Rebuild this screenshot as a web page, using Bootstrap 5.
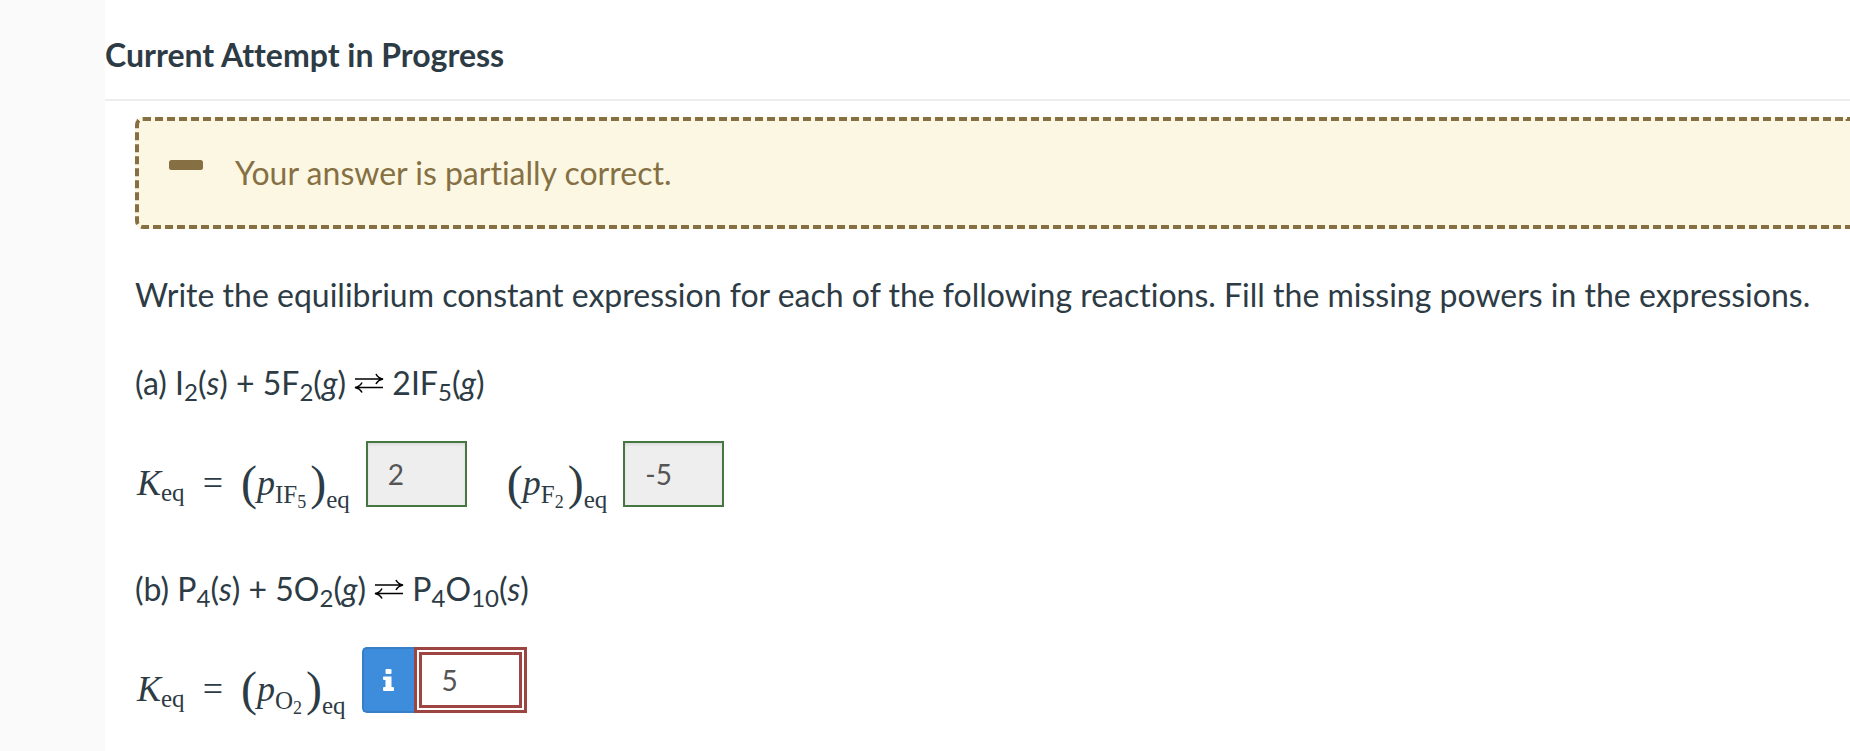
<!DOCTYPE html>
<html lang="en">
<head>
<meta charset="utf-8">
<meta name="viewport" content="width=device-width, initial-scale=1">
<title>Current Attempt in Progress</title>
<link rel="stylesheet" href="https://cdn.jsdelivr.net/npm/bootstrap@5.3.0/dist/css/bootstrap.min.css">
<style>
  body { font-family: Lato, sans-serif; font-size: 32px; line-height: 38px; font-variant-ligatures: none; color: #2d3b45; background: #fff; }
  .side-strip { width: 105px; background: #fafafa; }
  .attempt-head { padding: 36px 0 25px; border-bottom: 2px solid #ededed; }
  .attempt-head h1 { font-size: 32px; line-height: 38px; }
  .attempt-body { padding: 16px 0 32px 30px; }
  .partial-note { padding: 33px 30px; gap: 32px; border: 4px dashed #867043; border-right: 0; border-radius: 8px 0 0 8px; background: #fbf7e3; color: #867043; }
  .partial-note svg { width: 34px; height: 10px; margin-top: 6px; }
  .question-text { margin: 47px 0 50px; }
  .reaction { margin-bottom: 39px; }
  .reaction svg { width: 30px; height: 20px; vertical-align: 2px; }
  .answer-row { margin-bottom: 63px; column-gap: 16px; }
  .expr { font-family: "Liberation Serif", serif; font-size: 36px; line-height: 66px; padding: 9px 0 0 2px; height: 66px; white-space: nowrap; }
  .expr span { line-height: 0; }
  .expr-next { margin-left: 22px; }
  .low { font-size: 25px; vertical-align: -6px; }
  .low-deep { font-size: 25px; vertical-align: -13px; }
  .low-in { font-size: 25px; vertical-align: -8px; margin-right: 4px; }
  .low-in span { font-size: 18px; vertical-align: -5px; }
  .equals { margin: 0 18px; }
  .big-paren { font-size: 48px; vertical-align: -4px; }
  .power { width: 101px; height: 66px; padding: 0 20px; font-size: 28px; line-height: 34px; color: #555; border: 2px solid #467641; border-radius: 0; }
  .power:disabled { background: #eee; box-shadow: inset 0 2px 3px rgba(0,0,0,.08); opacity: 1; }
  .power.wrong { width: 113px; border: 8px double #9c4541; }
  .hint-btn { width: 52px; height: 66px; padding: 0; background: #3e8ddd; border: 2px solid #367ec8; border-right: 0; border-radius: 5px 0 0 5px; }
  .hint-btn svg { width: 12px; height: 22px; }
</style>
</head>
<body>
<div class="d-flex min-vh-100">
  <aside class="side-strip flex-shrink-0"></aside>
  <main class="flex-grow-1">
    <header class="attempt-head"><h1 class="fw-bold m-0">Current Attempt in Progress</h1></header>
    <div class="attempt-body">
      <div class="partial-note d-flex align-items-start" role="status">
        <svg viewBox="0 0 34 10" aria-hidden="true"><rect width="34" height="10" rx="2.5" fill="currentColor"/></svg>
        <span>Your answer is partially correct.</span>
      </div>
      <p class="question-text">Write the equilibrium constant expression for each of the following reactions. Fill the missing powers in the expressions.</p>

      <div class="reaction">(a) I<sub>2</sub>(<em>s</em>) + 5F<sub>2</sub>(<em>g</em>) <svg viewBox="0 0 30 20" fill="none" stroke="#000" stroke-width="1.6" role="img" aria-label="is in equilibrium with"><path d="M1 6H28M22 1Q24 5 29 6Q24 7 22 11M29 14.500H2M8 9.500Q6 13.500 1 14.500Q6 15.500 8 19.500"/></svg> 2IF<sub>5</sub>(<em>g</em>)</div>
      <div class="answer-row d-flex align-items-start">
        <label class="expr" for="powerIF5"><em>K</em><span class="low">eq</span><span class="equals">=</span><span class="big-paren">(</span><em>p</em><span class="low-in">IF<span>5</span></span><span class="big-paren">)</span><span class="low-deep">eq</span></label>
        <input class="form-control power" id="powerIF5" type="text" value="2" disabled>
        <label class="expr expr-next" for="powerF2"><span class="big-paren">(</span><em>p</em><span class="low-in">F<span>2</span></span><span class="big-paren">)</span><span class="low-deep">eq</span></label>
        <input class="form-control power" id="powerF2" type="text" value="-5" disabled>
      </div>

      <div class="reaction">(b) P<sub>4</sub>(<em>s</em>) + 5O<sub>2</sub>(<em>g</em>) <svg viewBox="0 0 30 20" fill="none" stroke="#000" stroke-width="1.6" role="img" aria-label="is in equilibrium with"><path d="M1 6H28M22 1Q24 5 29 6Q24 7 22 11M29 14.500H2M8 9.500Q6 13.500 1 14.500Q6 15.500 8 19.500"/></svg> P<sub>4</sub>O<sub>10</sub>(<em>s</em>)</div>
      <div class="d-flex align-items-start answer-row mb-0">
        <label class="expr" for="powerO2"><em>K</em><span class="low">eq</span><span class="equals">=</span><span class="big-paren">(</span><em>p</em><span class="low-in">O<span>2</span></span><span class="big-paren">)</span><span class="low-deep">eq</span></label>
        <div class="d-flex">
          <button class="btn hint-btn d-flex align-items-center justify-content-center" type="button" aria-label="Hint"><svg viewBox="0 0 12 22" fill="#fff" aria-hidden="true"><rect x="2.500" width="6" height="5" rx="1"/><path d="M1 7.500h7.500V18H10q1 0 1 1v2q0 1-1 1H1q-1 0-1-1v-2q0-1 1-1h1.500v-7H1q-1 0-1-1V8.500q0-1 1-1z"/></svg></button>
          <input class="form-control power wrong" id="powerO2" type="text" value="5">
        </div>
      </div>
    </div>
  </main>
</div>
<script src="https://cdn.jsdelivr.net/npm/bootstrap@5.3.0/dist/js/bootstrap.bundle.min.js"></script>
</body>
</html>
